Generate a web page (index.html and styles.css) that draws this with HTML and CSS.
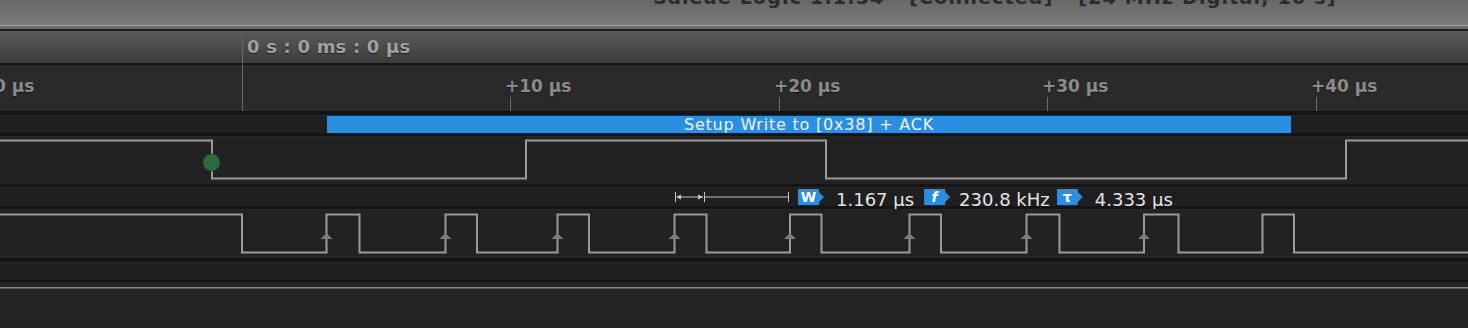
FILE: index.html
```html
<!DOCTYPE html>
<html lang="en">
<head>
    <meta charset="UTF-8">
    <title>Saleae Logic</title>
    <link rel="stylesheet" href="styles.css">
</head>
<body>
    <div class="titlebar">
        <span class="title">Saleae Logic 1.1.34 - [Connected] - [24 MHz Digital, 10 s]</span>
    </div>
    <div class="bevel"></div>

    <div class="timebar">
        <div class="header">
            <span class="cursor-time">0 s : 0 ms : 0 μs</span>
        </div>
        <div class="ruler">
            <span class="label label-prev">-10 μs</span>
            <span class="label label-10">+10 μs</span>
            <span class="label label-20">+20 μs</span>
            <span class="label label-30">+30 μs</span>
            <span class="label label-40">+40 μs</span>
            <span class="tick tick-10"></span>
            <span class="tick tick-20"></span>
            <span class="tick tick-30"></span>
            <span class="tick tick-40"></span>
        </div>
        <div class="cursor-line"></div>
    </div>

    <div class="channels">
        <!-- I2C analyzer -->
        <div class="row row-packets">
            <div class="packet">Setup Write to [0x38] + ACK</div>
        </div>

        <!-- SDA -->
        <div class="row row-sda">
            <svg class="wave" width="1468" height="48" viewBox="0 0 1468 48">
                <polyline points="0,4.5 212,4.5 212,42.5 526,42.5 526,4.5 826,4.5 826,42.5 1346,42.5 1346,4.5 1468,4.5"/>
                <circle class="start" cx="211.5" cy="26.5" r="8.5"/>
            </svg>
        </div>

        <!-- measurement -->
        <div class="row row-measure">
            <div class="measure">
                <svg class="span" width="118" height="12" viewBox="0 0 118 12">
                    <line x1="1.5" y1="1" x2="1.5" y2="11"/>
                    <line x1="3" y1="6" x2="29" y2="6"/>
                    <polygon points="2,6 7,3.5 7,8.5"/>
                    <polygon points="29,6 24,3.5 24,8.5"/>
                    <line x1="30.5" y1="1" x2="30.5" y2="11"/>
                    <line x1="31" y1="6" x2="114" y2="6"/>
                    <line x1="114.5" y1="1" x2="114.5" y2="11"/>
                </svg>
                <span class="badge">W</span>
                <span class="value value-w">1.167 μs</span>
                <span class="badge badge-f">f</span>
                <span class="value value-f">230.8 kHz</span>
                <span class="badge">τ</span>
                <span class="value">4.333 μs</span>
            </div>
        </div>

        <!-- SCL -->
        <div class="row row-scl">
            <svg class="wave" width="1468" height="49" viewBox="0 0 1468 49">
                <polyline points="0,5.5 242,5.5 242,43.5 326.5,43.5 326.5,5.5 359.5,5.5 359.5,43.5 445.5,43.5 445.5,5.5 477,5.5 477,43.5 557.5,43.5 557.5,5.5 589,5.5 589,43.5 674.5,43.5 674.5,5.5 706.5,5.5 706.5,43.5 790,43.5 790,5.5 821.5,5.5 821.5,43.5 909.5,43.5 909.5,5.5 941,5.5 941,43.5 1026.5,43.5 1026.5,5.5 1059.5,5.5 1059.5,43.5 1144,43.5 1144,5.5 1178.5,5.5 1178.5,43.5 1262.5,43.5 1262.5,5.5 1294,5.5 1294,43.5 1468,43.5"/>
                <g class="edges">
                    <polygon points="320.5,30 326.5,24 332.5,30"/>
                    <polygon points="439.5,30 445.5,24 451.5,30"/>
                    <polygon points="551.5,30 557.5,24 563.5,30"/>
                    <polygon points="668.5,30 674.5,24 680.5,30"/>
                    <polygon points="784,30 790,24 796,30"/>
                    <polygon points="903.5,30 909.5,24 915.5,30"/>
                    <polygon points="1020.5,30 1026.5,24 1032.5,30"/>
                    <polygon points="1138,30 1144,24 1150,30"/>
                </g>
            </svg>
        </div>

        <div class="row row-empty"></div>
    </div>

    <div class="footer">
        <div class="footer-line"></div>
    </div>
</body>
</html>
```

FILE: styles.css
```css
body {
    margin: 0;
    padding: 0;
    width: 1468px;
    height: 328px;
    overflow: hidden;
    background-color: #232323;
    font-family: "DejaVu Sans", Verdana, sans-serif;
}
.titlebar {
    height: 25px;
    background: linear-gradient(#686868, #7b7b7b);
    border-bottom: 1px solid #a0a0a0;
    overflow: hidden;
}
.title {
    display: block;
    margin-top: -12px;
    padding-left: 653px;
    font-size: 19px;
    line-height: 18px;
    font-weight: bold;
    letter-spacing: 1.2px;
    color: #2b2b2b;
    white-space: nowrap;
}
.bevel {
    height: 3px;
    background-color: #6c6c6c;
    border-bottom: 2px solid #1a1a1a;
}
.timebar {
    position: relative;
}
.header {
    height: 32px;
    background: linear-gradient(#5a5a5a, #3c3c3c);
    border-bottom: 2px solid #151515;
}
.cursor-time {
    display: block;
    padding: 7px 0 0 247px;
    font-size: 18px;
    line-height: 18px;
    font-weight: bold;
    letter-spacing: 0.2px;
    color: #a2a2a2;
    text-shadow: 0 1px 1px #1c1c1c;
}
.ruler {
    position: relative;
    height: 46px;
    background-color: #2a2a2a;
    overflow: hidden;
}
.label {
    position: absolute;
    top: 13px;
    font-size: 17px;
    line-height: 17px;
    font-weight: bold;
    color: #8b8b8b;
    text-shadow: 0 1px 1px #1a1a1a;
    white-space: nowrap;
}
.label-prev { left: -25px; }
.label-10 { left: 505px; }
.label-20 { left: 774px; }
.label-30 { left: 1042px; }
.label-40 { left: 1311px; }
.tick {
    position: absolute;
    top: 32px;
    width: 1px;
    height: 14px;
    background-color: #6f6f6f;
}
.tick-10 { left: 510px; }
.tick-20 { left: 779px; }
.tick-30 { left: 1047px; }
.tick-40 { left: 1316px; }
.cursor-line {
    position: absolute;
    left: 242px;
    top: 7px;
    bottom: 0;
    width: 1px;
    background-color: #6a6a6a;
}
.channels {
    background-color: #141414;
    padding-top: 4px;
    padding-bottom: 2px;
}
.row {
    position: relative;
    background-color: #222222;
    border-top: 1px solid #282828;
    box-sizing: border-box;
}
.row-packets {
    height: 18px;
    margin-bottom: 3px;
    background-color: #1f1f1f;
}
.packet {
    position: absolute;
    left: 327px;
    top: 0;
    width: 964px;
    height: 17px;
    background-color: #2b8fe1;
    color: #f2f2f2;
    font-size: 16px;
    line-height: 17px;
    letter-spacing: 0.8px;
    text-align: center;
    white-space: nowrap;
}
.row-sda {
    height: 48px;
    margin-bottom: 3px;
}
.row-measure {
    height: 19px;
    margin-bottom: 3px;
    background-color: #1f1f1f;
}
.row-scl {
    height: 49px;
    margin-bottom: 4px;
}
.row-empty {
    height: 18px;
    background-color: #1f1f1f;
}
.wave {
    display: block;
    position: absolute;
    top: -1px;
    left: 0;
}
.wave polyline {
    fill: none;
    stroke: #9a9a9a;
    stroke-width: 2;
}
.wave .start {
    fill: #2e6a3e;
    stroke: #1e4a2b;
    stroke-width: 1;
}
.wave .edges polygon {
    fill: #7c7c7c;
}
.measure {
    position: absolute;
    left: 674px;
    top: 1px;
    display: flex;
    align-items: center;
    height: 16px;
    white-space: nowrap;
}
.span line {
    stroke: #c4c4c4;
    stroke-width: 1;
}
.span polygon {
    fill: #c4c4c4;
}
.span {
    margin-right: 6px;
}
.badge {
    width: 26px;
    height: 16px;
    padding-right: 5px;
    box-sizing: border-box;
    background-color: #2b8fe1;
    clip-path: polygon(0 0, 21px 0, 21px 3px, 26px 8px, 21px 13px, 21px 16px, 0 16px);
    color: #ffffff;
    font-size: 14px;
    line-height: 16px;
    font-weight: bold;
    text-align: center;
}
.badge-f {
    font-style: italic;
}
.value {
    margin-left: 12px;
    margin-right: 10px;
    font-size: 18px;
    line-height: 16px;
    padding-top: 6px;
    color: #e4e4e4;
}
.value-f {
    margin-left: 9px;
    margin-right: 7px;
}
.footer {
    padding-top: 5px;
}
.footer-line {
    height: 1px;
    background-color: #8a8a8a;
    border-bottom: 1px solid #555555;
}
```
